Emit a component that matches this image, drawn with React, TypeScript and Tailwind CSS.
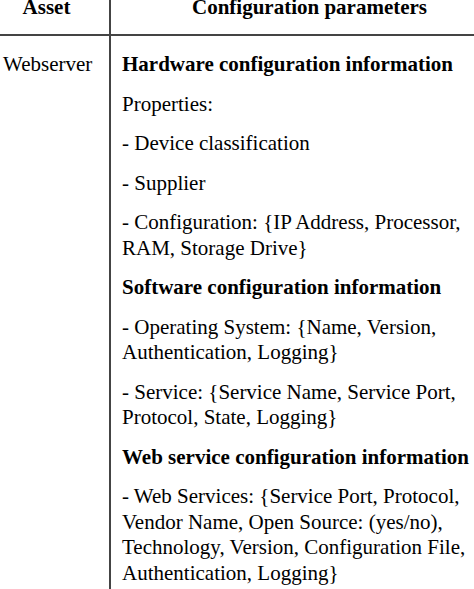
import React from "react";

type Section = {
  title: string;
  items: string[][];
};

const sections: Section[] = [
  {
    title: "Hardware configuration information",
    items: [
      ["Properties:"],
      ["- Device classification"],
      ["- Supplier"],
      ["- Configuration: {IP Address, Processor,", "RAM, Storage Drive}"],
    ],
  },
  {
    title: "Software configuration information",
    items: [
      ["- Operating System: {Name, Version,", "Authentication, Logging}"],
      ["- Service: {Service Name, Service Port,", "Protocol, State, Logging}"],
    ],
  },
  {
    title: "Web service configuration information",
    items: [
      [
        "- Web Services: {Service Port, Protocol,",
        "Vendor Name, Open Source: (yes/no),",
        "Technology, Version, Configuration File,",
        "Authentication, Logging}",
      ],
    ],
  },
];

export default function App() {
  return (
    <div className="w-[474px] h-[589px] overflow-hidden bg-white text-black font-['Liberation_Serif',serif] text-[21px] leading-[25.5px]">
      <div className="grid grid-cols-[111px_397px] w-[508px]">
        {/* header row */}
        <div className="h-[36px] border-r-2 border-b-2 border-[#444] pr-[16px] text-center font-bold">
          <div className="-mt-[5px]">Asset</div>
        </div>
        <div className="h-[36px] border-b-2 border-[#444] text-center font-bold">
          <div className="-mt-[5px]">Configuration parameters</div>
        </div>

        {/* body row */}
        <div className="h-[560px] border-r-2 border-[#444] pl-[3px] pt-[16px]">Webserver</div>
        <div className="pl-[11px] pt-[16px] flex flex-col gap-[14px] whitespace-nowrap">
          {sections.map((s) => (
            <React.Fragment key={s.title}>
              <p className="font-bold">{s.title}</p>
              {s.items.map((lines) => (
                <p key={lines[0]}>
                  {lines.map((l, i) => (
                    <span key={i} className="block">
                      {l}
                    </span>
                  ))}
                </p>
              ))}
            </React.Fragment>
          ))}
        </div>
      </div>
    </div>
  );
}
